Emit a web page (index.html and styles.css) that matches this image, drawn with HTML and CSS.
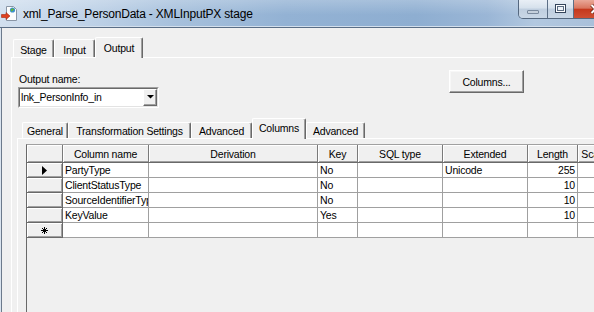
FILE: index.html
```html
<!DOCTYPE html>
<html>
<head>
<meta charset="utf-8">
<title>xml_Parse_PersonData - XMLInputPX stage</title>
<link rel="stylesheet" href="styles.css">
</head>
<body>
<div class="window">
  <div class="titlebar">
    <svg class="app-icon" width="16" height="16" viewBox="0 0 16 16">
      <path d="M5.5 1.5 H12.5 L15.5 4.5 V15.5 H5.5 Z" fill="#fdfdfd" stroke="#8a96a6"/>
      <circle cx="11.5" cy="5" r="2.6" fill="#3c8fd0"/>
      <path d="M9.8 4.2 C10.8 3 12.6 3.4 13.2 4.6 C12.2 5.6 11 6.8 10 6.6 Z" fill="#5fb43c"/>
      <path d="M0.5 9.5 H5 V7.5 L9 11 L5 14.5 V12.5 H0.5 Z" fill="#e0401e" stroke="#a52a10" stroke-width="0.6"/>
    </svg>
    <span class="title">xml_Parse_PersonData - XMLInputPX stage</span>
    <div class="caption-buttons">
      <div class="cbtn cbtn-min"><span class="min-bar"></span></div>
      <div class="cbtn cbtn-max"><span class="max-box"></span></div>
      <div class="cbtn cbtn-close">
        <svg width="11" height="10" viewBox="0 0 11 10"><path d="M1.5 1 L9.5 9 M9.5 1 L1.5 9" stroke="#5a1a10" stroke-width="3.4"/><path d="M1.5 1 L9.5 9 M9.5 1 L1.5 9" stroke="#ffffff" stroke-width="2"/></svg>
      </div>
    </div>
  </div>

  <div class="client">
    <div class="tabs outer-tabs">
      <div class="tab w-stage">Stage</div>
      <div class="tab w-input">Input</div>
      <div class="tab active w-output">Output</div>
    </div>
    <div class="panel outer-panel">
      <div class="output-row">
        <div class="output-field">
          <div class="output-label">Output name:</div>
          <div class="combo">
            <div class="combo-inner">
              <span class="combo-text">lnk_PersonInfo_in</span>
              <span class="combo-btn">
                <svg width="7" height="4" viewBox="0 0 7 4"><polygon points="0,0 7,0 3.5,3.6" fill="#000"/></svg>
              </span>
            </div>
          </div>
        </div>
        <div class="button">Columns...</div>
      </div>

      <div class="tabs inner-tabs">
        <div class="tab w-general">General</div>
        <div class="tab w-trans">Transformation Settings</div>
        <div class="tab w-adv1">Advanced</div>
        <div class="tab active w-cols">Columns</div>
        <div class="tab w-adv2">Advanced</div>
      </div>
      <div class="panel inner-panel">
        <div class="grid">
          <div class="table">
            <div class="hc"></div>
            <div class="hc">Column name</div>
            <div class="hc">Derivation</div>
            <div class="hc">Key</div>
            <div class="hc">SQL type</div>
            <div class="hc">Extended</div>
            <div class="hc">Length</div>
            <div class="hc">Scale</div>
            <div class="hc"></div>

            <div class="rh"><svg width="5" height="9" viewBox="0 0 5 9"><polygon points="0,0 5,4.5 0,9" fill="#000"/></svg></div>
            <div class="dc">PartyType</div>
            <div class="dc"></div>
            <div class="dc">No</div>
            <div class="dc"></div>
            <div class="dc">Unicode</div>
            <div class="dc num">255</div>
            <div class="dc"></div>
            <div class="dc"></div>

            <div class="rh"></div>
            <div class="dc">ClientStatusType</div>
            <div class="dc"></div>
            <div class="dc">No</div>
            <div class="dc"></div>
            <div class="dc"></div>
            <div class="dc num">10</div>
            <div class="dc"></div>
            <div class="dc"></div>

            <div class="rh"></div>
            <div class="dc">SourceIdentifierType</div>
            <div class="dc"></div>
            <div class="dc">No</div>
            <div class="dc"></div>
            <div class="dc"></div>
            <div class="dc num">10</div>
            <div class="dc"></div>
            <div class="dc"></div>

            <div class="rh"></div>
            <div class="dc">KeyValue</div>
            <div class="dc"></div>
            <div class="dc">Yes</div>
            <div class="dc"></div>
            <div class="dc"></div>
            <div class="dc num">10</div>
            <div class="dc"></div>
            <div class="dc"></div>

            <div class="rh"><svg width="7" height="7" viewBox="0 0 7 7" shape-rendering="crispEdges"><path d="M3.5 0 V7 M0 3.5 H7 M1 1 L6 6 M6 1 L1 6" stroke="#000" stroke-width="1"/></svg></div>
            <div class="dc"></div>
            <div class="dc"></div>
            <div class="dc"></div>
            <div class="dc"></div>
            <div class="dc"></div>
            <div class="dc"></div>
            <div class="dc"></div>
            <div class="dc"></div>
          </div>
        </div>
      </div>
    </div>
  </div>
</div>
</body>
</html>
```

FILE: styles.css
```css
* { box-sizing: border-box; }

html, body {
  margin: 0;
  padding: 0;
}

body {
  width: 594px;
  height: 312px;
  overflow: hidden;
  background: #f0f0f0;
  font-family: "Liberation Sans", Arial, sans-serif;
  font-size: 10.5px;
  letter-spacing: -0.2px;
  color: #000;
}

.window {
  display: flex;
  flex-direction: column;
  height: 312px;
}

/* ---------- title bar ---------- */
.titlebar {
  flex: none;
  height: 28px;
  display: flex;
  align-items: flex-start;
  overflow: hidden;
  background:
    linear-gradient(to bottom, rgba(255,255,255,0.22), rgba(255,255,255,0) 55%),
    linear-gradient(to right, #d2e0ef 0%, #c3d5e9 12%, #a6c0dc 30%, #93b2d4 48%, #8eaed1 70%, #9ab6d6 82%, #b2c8e0 90%, #a9c0da 100%);
  border-bottom: 1px solid #5a6e86;
  box-shadow: inset 0 -1px 0 #d3dfec;
}

.app-icon {
  flex: none;
  margin: 5px 0 0 1px;
}

.title {
  margin: 7px 0 0 6px;
  font-size: 12px;
  line-height: 14px;
  letter-spacing: -0.2px;
  white-space: nowrap;
}

.caption-buttons {
  flex: none;
  display: flex;
  margin-left: auto;
  margin-right: -24px;
  height: 19px;
  border: 1px solid #55687f;
  border-top: none;
  border-radius: 0 0 5px 5px;
  overflow: hidden;
}

.cbtn {
  height: 18px;
  display: flex;
  justify-content: center;
}

.cbtn-min {
  width: 29px;
  border-right: 1px solid #5c6f86;
  background: linear-gradient(to bottom, #e9eff6 0%, #d6e1ec 45%, #bfcedf 50%, #c9d7e6 100%);
  align-items: flex-start;
  padding-top: 10px;
}

.min-bar {
  width: 12px;
  height: 4px;
  background: #c5d0dc;
  border: 1px solid #7a8a9e;
  border-radius: 1px;
}

.cbtn-max {
  width: 26px;
  border-right: 1px solid #5c6f86;
  background: linear-gradient(to bottom, #e9eff6 0%, #d6e1ec 45%, #bfcedf 50%, #c9d7e6 100%);
  align-items: flex-start;
  padding-top: 4px;
}

.max-box {
  width: 11px;
  height: 9px;
  border: 1px solid #34445a;
  background: #eef2f7;
  box-shadow: inset 0 0 0 1px #ffffff, inset 0 0 0 2px #5b6c82;
}

.cbtn-close {
  width: 43px;
  align-items: center;
  background: linear-gradient(to bottom, #e9a898 0%, #d9765f 45%, #c5391d 52%, #cf4e33 100%);
}

/* ---------- client ---------- */
.client {
  flex: 1;
  display: flex;
  flex-direction: column;
  padding: 9px 0 0 11px;
  box-shadow: inset 1px 0 #dae4ef, inset 2px 0 #6c7a8c;
  overflow: hidden;
}

.tabs {
  flex: none;
  display: flex;
  align-items: flex-end;
  height: 20px;
}

.tab {
  flex: none;
  background: #f0f0f0;
  border-top: 1px solid #fff;
  border-left: 1px solid #fff;
  border-right: 1px solid #696969;
  box-shadow: inset -1px 0 #a0a0a0;
  border-radius: 2px 2px 0 0;
  text-align: center;
  white-space: nowrap;
  line-height: 14px;
}

.tab.active {
  position: relative;
  z-index: 1;
  margin-bottom: -1px;
}

.outer-tabs { padding-left: 2px; }
.outer-tabs .tab { height: 18px; padding-top: 3px; }
.outer-tabs .tab.active { height: 21px; }

.inner-tabs { margin-top: 10px; padding-left: 5px; }
.inner-tabs .tab { height: 16px; padding-top: 1px; }
.inner-tabs .tab.active { height: 21px; padding-top: 2px; }

.w-stage { width: 41px; }
.w-input { width: 41px; }
.w-output { width: 48px; }
.w-general { width: 46px; }
.w-trans { width: 123px; }
.w-adv1 { width: 61px; }
.w-cols { width: 54px; }
.w-adv2 { width: 59px; }

.panel {
  border-top: 1px solid #fff;
  border-left: 1px solid #fff;
}

.outer-panel {
  flex: 1;
  display: flex;
  flex-direction: column;
  padding: 14px 0 0 5px;
  min-height: 0;
}

.output-row {
  display: flex;
  align-items: flex-start;
}

.output-field {
  width: 143px;
  display: flex;
  flex-direction: column;
}

.output-label {
  margin-left: 2px;
  line-height: 14px;
}

.combo {
  margin: 1px 0 0 1px;
  width: 141px;
  height: 21px;
  background: #fff;
  border: 1px solid;
  border-color: #a0a0a0 #ffffff #ffffff #a0a0a0;
}

.combo-inner {
  height: 100%;
  display: flex;
  border: 1px solid;
  border-color: #696969 #e3e3e3 #e3e3e3 #696969;
}

.combo-text {
  flex: 1;
  padding: 1px 0 0 1px;
  line-height: 14px;
  white-space: nowrap;
}

.combo-btn {
  width: 14px;
  height: 17px;
  background: #f0f0f0;
  border: 1px solid;
  border-color: #ffffff #696969 #696969 #ffffff;
  box-shadow: inset -1px -1px #a0a0a0;
  display: flex;
  align-items: center;
  justify-content: center;
  padding-bottom: 1px;
}

.button {
  margin: -2px 0 0 289px;
  width: 75px;
  height: 23px;
  background: #f0f0f0;
  border: 1px solid;
  border-color: #ffffff #696969 #696969 #ffffff;
  box-shadow: inset -1px -1px #a0a0a0, inset 1px 1px #f7f7f7;
  text-align: center;
  padding-top: 1px;
  line-height: 20px;
}

.inner-panel {
  flex: 1;
  display: flex;
  flex-direction: column;
  padding: 5px 0 0 8px;
  min-height: 0;
}

/* ---------- grid ---------- */
.grid {
  flex: 1;
  background: #f0f0f0;
  border-left: 1px solid #696969;
  border-top: 1px solid #a0a0a0;
  overflow: hidden;
}

.table {
  display: grid;
  grid-template-columns: 36px 86px 169px 40px 85px 85px 50px 33px 85px;
  grid-template-rows: 18px repeat(5, 15px);
  width: max-content;
}

.hc {
  background: #f0f0f0;
  border-right: 1px solid #7a7a7a;
  border-bottom: 1px solid #696969;
  box-shadow: inset 1px 1px #ffffff, inset 0 -1px #a0a0a0;
  text-align: center;
  white-space: nowrap;
  overflow: hidden;
  line-height: 14px;
  padding-top: 2px;
}

.rh {
  background: #f0f0f0;
  border-right: 1px solid #696969;
  border-bottom: 1px solid #696969;
  box-shadow: inset 1px 1px #ffffff, inset -1px -1px #a0a0a0;
  display: flex;
  align-items: center;
  justify-content: center;
}

.dc {
  background: #fff;
  border-right: 1px solid #a0a0a0;
  border-bottom: 1px solid #a0a0a0;
  padding: 1px 2px 0 2px;
  line-height: 13px;
  white-space: nowrap;
  overflow: hidden;
}

.dc.num { text-align: right; }
```
